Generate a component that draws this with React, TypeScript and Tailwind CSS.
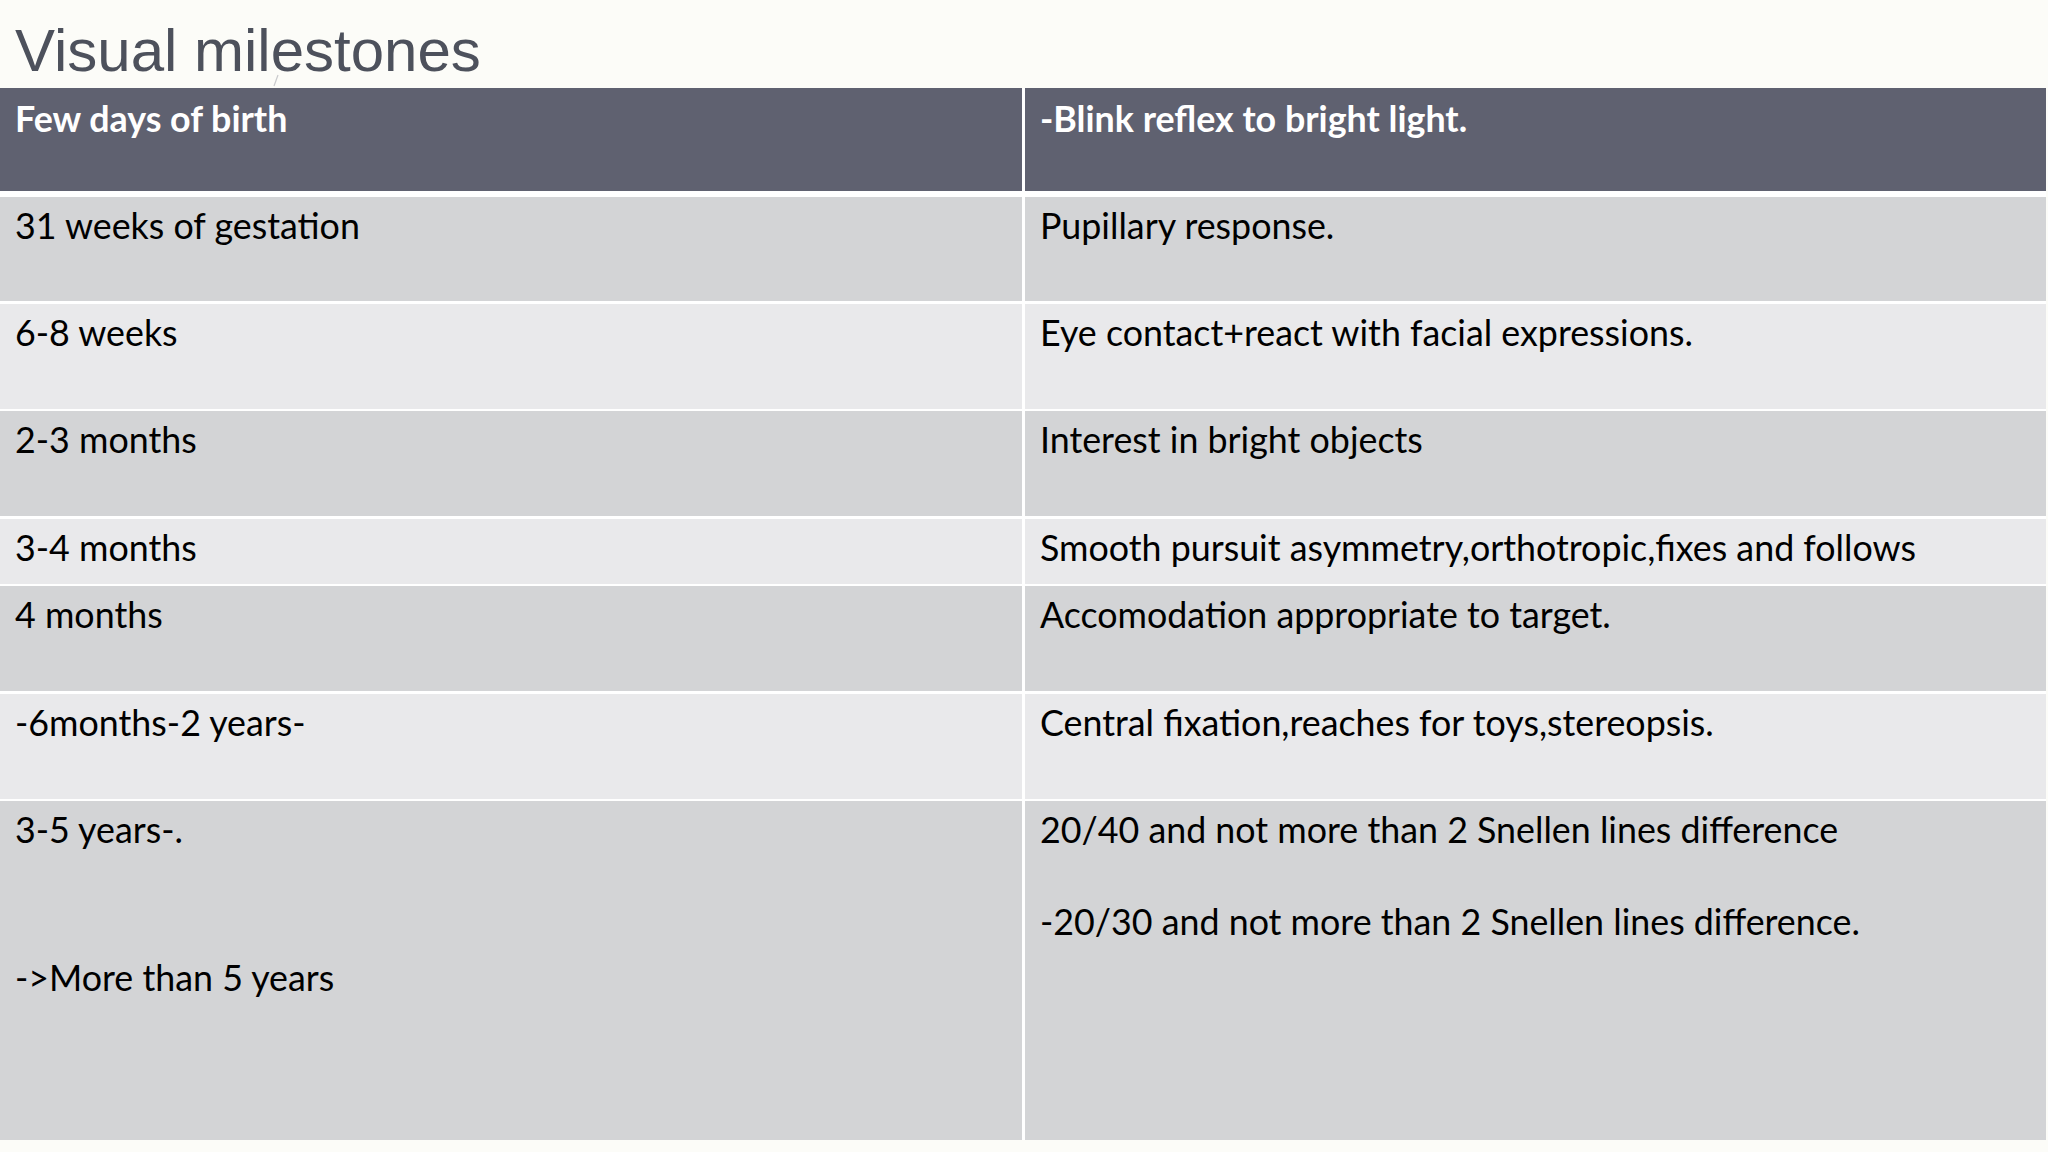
import React from "react";

type Row = {
  age: React.ReactNode;
  sign: React.ReactNode;
  height: string;
  shade: "dark" | "light";
};

const rows: Row[] = [
  { age: "31 weeks of gestation", sign: "Pupillary response.", height: "h-[104px]", shade: "dark" },
  { age: "6-8 weeks", sign: "Eye contact+react with facial expressions.", height: "h-[105px]", shade: "light" },
  { age: "2-3 months", sign: "Interest in bright objects", height: "h-[105px]", shade: "dark" },
  { age: "3-4 months", sign: "Smooth pursuit asymmetry,orthotropic,fixes and follows", height: "h-[65px]", shade: "light" },
  { age: "4 months", sign: "Accomodation appropriate to target.", height: "h-[105px]", shade: "dark" },
  { age: "-6months-2 years-", sign: "Central fixation,reaches for toys,stereopsis.", height: "h-[105px]", shade: "light" },
  {
    age: (
      <>
        <p>3-5 years-.</p>
        <p className="mt-[102px]">-&gt;More than 5 years</p>
      </>
    ),
    sign: (
      <>
        <p>20/40 and not more than 2 Snellen lines difference</p>
        <p className="mt-[46px]">-20/30 and not more than 2 Snellen lines difference.</p>
      </>
    ),
    height: "h-[339px]",
    shade: "dark",
  },
];

const cell = "pl-[15px] text-[35.8px] leading-[46px] text-black";

const App = () => {
  return (
    <div className="relative h-[1152px] w-[2048px] overflow-hidden bg-[#fcfcf8] font-['Lato',sans-serif]">
      {/* slide title */}
      <div className="h-[88px] pl-[15px] pt-[21px]">
        <h1 className="font-['Liberation_Sans',Arial,sans-serif] text-[60px] leading-[60px] text-[#4d515c]">
          Visual milestones
        </h1>
      </div>
      <svg className="absolute left-[272px] top-[74px]" width="8" height="13" viewBox="0 0 8 13">
        <line x1="6" y1="1" x2="2" y2="12" stroke="#c9cacc" strokeWidth="1.2" />
      </svg>

      {/* table */}
      <div className="w-[2046px] bg-white">
        <div className="grid h-[103px] grid-cols-[1022px_1021px] gap-x-[3px] bg-white">
          <div className={`${cell} pt-[8px] bg-[#5f6170] font-bold text-white`}>Few days of birth</div>
          <div className={`${cell} pt-[8px] bg-[#5f6170] font-bold text-white`}>-Blink reflex to bright light.</div>
        </div>
        <div className="mt-[6px] flex flex-col gap-y-[2.5px]">
          {rows.map((r, i) => {
            const bg = r.shade === "dark" ? "bg-[#d3d4d6]" : "bg-[#e9e9eb]";
            return (
              <div key={i} className={`grid ${r.height} grid-cols-[1022px_1021px] gap-x-[3px]`}>
                <div className={`${cell} pt-[6px] ${bg}`}>{r.age}</div>
                <div className={`${cell} pt-[6px] ${bg}`}>{r.sign}</div>
              </div>
            );
          })}
        </div>
      </div>
    </div>
  );
};

export default App;
